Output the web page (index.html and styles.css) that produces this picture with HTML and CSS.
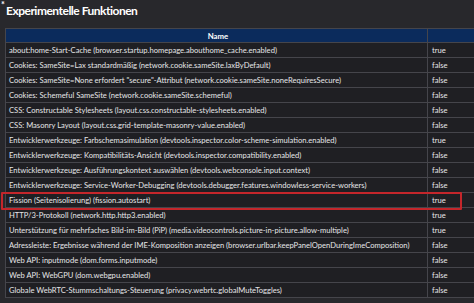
FILE: index.html
```html
<!DOCTYPE html>
<html lang="de">
<head>
<meta charset="utf-8">
<link rel="stylesheet" href="styles.css">
</head>
<body>
<div class="page">
  <span class="mark">*</span>
  <h1 class="title">Experimentelle Funktionen</h1>
  <table class="flags">
    <thead>
      <tr><th class="c-name">Name</th><th class="c-val"></th></tr>
    </thead>
    <tbody>
      <tr><td>about:home-Start-Cache (browser.startup.homepage.abouthome_cache.enabled)</td><td>true</td></tr>
      <tr><td>Cookies: SameSite=Lax standardmäßig (network.cookie.sameSite.laxByDefault)</td><td>false</td></tr>
      <tr><td>Cookies: SameSite=None erfordert "secure"-Attribut (network.cookie.sameSite.noneRequiresSecure)</td><td>false</td></tr>
      <tr><td>Cookies: Schemeful SameSite (network.cookie.sameSite.schemeful)</td><td>false</td></tr>
      <tr><td>CSS: Constructable Stylesheets (layout.css.constructable-stylesheets.enabled)</td><td>false</td></tr>
      <tr><td>CSS: Masonry Layout (layout.css.grid-template-masonry-value.enabled)</td><td>false</td></tr>
      <tr><td>Entwicklerwerkzeuge: Farbschemasimulation (devtools.inspector.color-scheme-simulation.enabled)</td><td>true</td></tr>
      <tr><td>Entwicklerwerkzeuge: Kompatibilitäts-Ansicht (devtools.inspector.compatibility.enabled)</td><td>false</td></tr>
      <tr><td>Entwicklerwerkzeuge: Ausführungskontext auswählen (devtools.webconsole.input.context)</td><td>false</td></tr>
      <tr><td>Entwicklerwerkzeuge: Service-Worker-Debugging (devtools.debugger.features.windowless-service-workers)</td><td>false</td></tr>
      <tr class="hl"><td>Fission (Seitenisolierung) (fission.autostart)</td><td>true</td></tr>
      <tr><td>HTTP/3-Protokoll (network.http.http3.enabled)</td><td>true</td></tr>
      <tr><td>Unterstützung für mehrfaches Bild-im-Bild (PiP) (media.videocontrols.picture-in-picture.allow-multiple)</td><td>true</td></tr>
      <tr><td>Adressleiste: Ergebnisse während der IME-Komposition anzeigen (browser.urlbar.keepPanelOpenDuringImeComposition)</td><td>false</td></tr>
      <tr><td>Web API: inputmode (dom.forms.inputmode)</td><td>false</td></tr>
      <tr><td>Web API: WebGPU (dom.webgpu.enabled)</td><td>false</td></tr>
      <tr><td>Globale WebRTC-Stummschaltungs-Steuerung (privacy.webrtc.globalMuteToggles)</td><td>false</td></tr>
    </tbody>
  </table>
  <div class="redbox"></div>
</div>
</body>
</html>
```
FILE: styles.css
```css
html, body {
  margin: 0;
  padding: 0;
  background: #28282c;
  overflow: hidden;
}
.page {
  position: relative;
  width: 474px;
  height: 303px;
  padding: 0 0 0 5px;
  box-sizing: border-box;
  font-family: Lato, "Noto Sans", sans-serif;
  color: #e6e6e8;
}
.mark {
  position: absolute;
  left: 1px;
  top: -1px;
  font-size: 9px;
  font-weight: bold;
  color: #ffffff;
}
.title {
  margin: 0;
  padding: 3px 0 0 1px;
  height: 26px;
  box-sizing: border-box;
  font-size: 12px;
  letter-spacing: -0.5px;
  font-weight: bold;
  color: #ffffff;
}
.flags {
  border-collapse: collapse;
  width: 480px;
  table-layout: fixed;
  margin-top: 2px;
  font-size: 7.6px;
}
.flags th, .flags td {
  border: 1px solid #45454b;
  padding: 0 0 0 3px;
  text-align: left;
  white-space: nowrap;
  overflow: hidden;
}
.flags thead tr {
  background: #0b2b5c;
  height: 14px;
}
.flags th {
  font-weight: bold;
  color: #ffffff;
  font-size: 7.8px;
}
.flags th.c-name {
  text-align: center;
  width: 418px;
}
.flags tbody tr {
  height: 15px;
  background: #1f1f23;
}
.flags td:last-child {
  padding-left: 4px;
}
.redbox {
  position: absolute;
  left: 1px;
  top: 192px;
  width: 461px;
  height: 18px;
  border: 2px solid #c4262b;
  box-sizing: border-box;
  border-radius: 1px;
}
```
